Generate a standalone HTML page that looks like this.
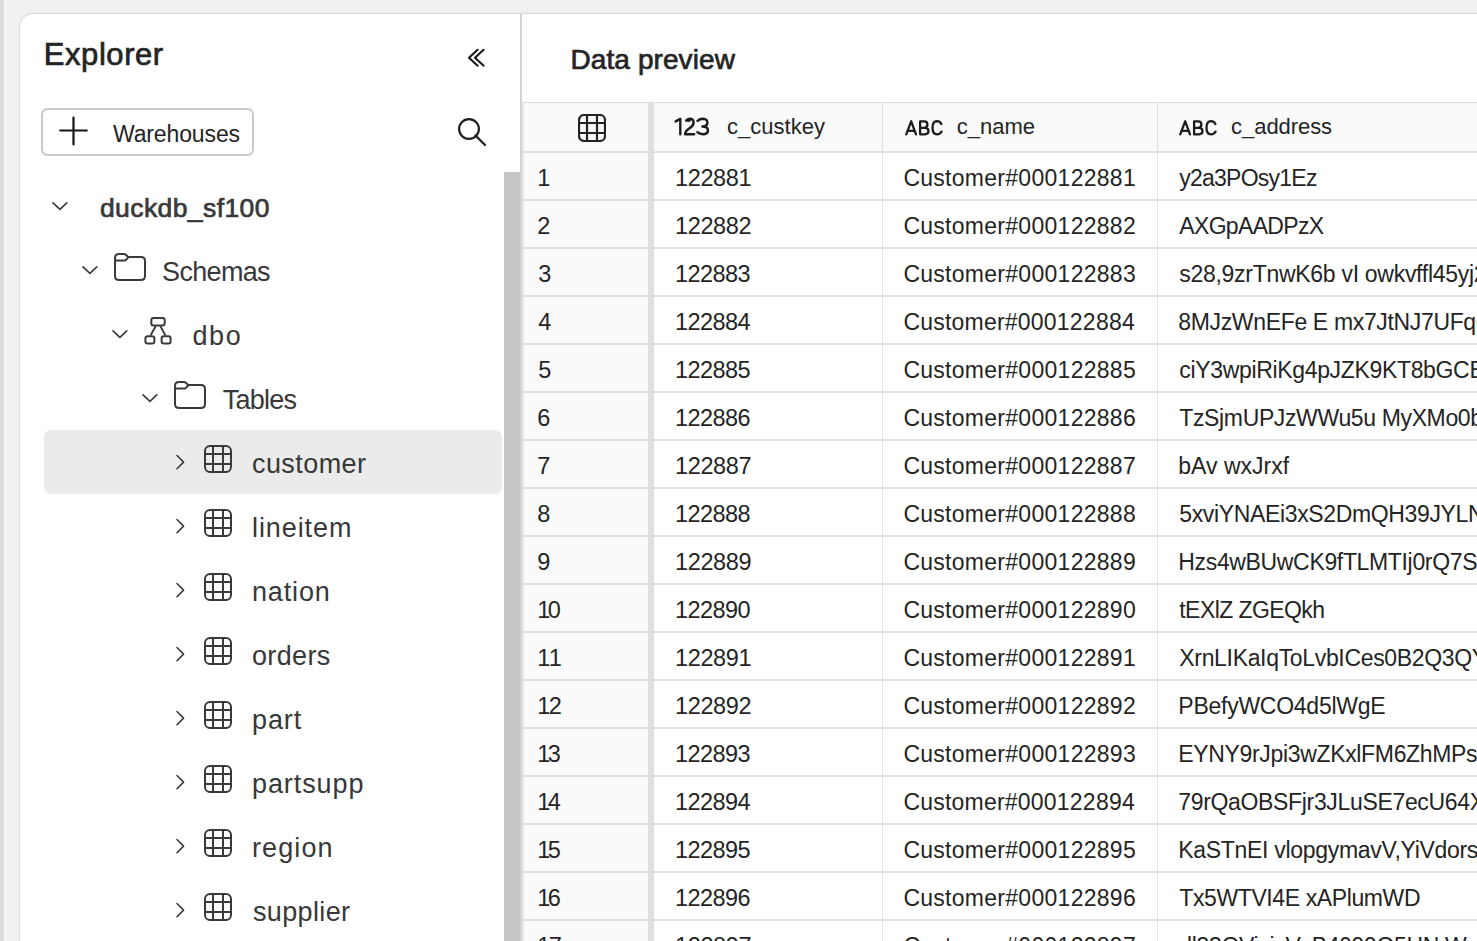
<!DOCTYPE html>
<html><head><meta charset="utf-8"><title>Explorer - Data preview</title>
<style>
html,body{margin:0;padding:0;}
body{width:1477px;height:941px;overflow:hidden;position:relative;background:#f0f0f0;font-family:"Liberation Sans",sans-serif;}
.strip{position:absolute;left:0;top:0;width:4px;height:941px;background:#dcdcdc;box-shadow:2px 0 0 #f5f5f5}
.panel{position:absolute;left:20px;top:14px;width:1480px;height:960px;background:#fff;border-top-left-radius:14px;box-shadow:0 0 0 1px #dadada, 0 -1px 3px rgba(0,0,0,0.07);overflow:hidden}
.divider{position:absolute;left:520px;top:14px;width:2px;height:928px;background:#d4d4d4}
.t{position:absolute;white-space:nowrap;line-height:1;}
.ic{position:absolute;display:block}
.btn{position:absolute;left:40.5px;top:108px;width:213px;height:48px;box-sizing:border-box;border:2px solid #cacaca;border-radius:6.5px;background:#fff}
</style></head><body>
<div class="strip"></div>
<div class="panel"></div>
<div class="divider"></div>
<div class="t" style="left:43.75px;top:38.96px;font-size:31px;font-weight:normal;color:#242424;letter-spacing:0.570px;-webkit-text-stroke:0.7px #242424;">Explorer</div>
<svg class="ic" style="left:460px;top:42px" width="32" height="32" viewBox="0 0 32 32"><path d="M17.6 7.8 L9 15.8 L17.6 23.7 M23.6 7.8 L15 15.8 L23.6 23.7" fill="none" stroke="#1a1a1a" stroke-width="2.1" stroke-linecap="round" stroke-linejoin="round"/></svg><div class="btn"></div><svg class="ic" style="left:58px;top:115px" width="32" height="32" viewBox="0 0 32 32"><path d="M15.5 2.5 V29.5 M2.2 15.5 H28.8" fill="none" stroke="#141414" stroke-width="2.2" stroke-linecap="round"/></svg><div class="t" style="left:112.90px;top:122.53px;font-size:23px;font-weight:normal;color:#242424;letter-spacing:-0.118px;">Warehouses</div>
<svg class="ic" style="left:455px;top:115px" width="34" height="34" viewBox="0 0 34 34"><circle cx="14" cy="14" r="9.9" fill="none" stroke="#1f1f1f" stroke-width="2.2"/><path d="M20.5 20.5 L30 30" stroke="#242424" stroke-width="2.4" stroke-linecap="round"/></svg><div style="position:absolute;left:504px;top:172px;width:16px;height:769px;background:#c7c7c7"></div><svg class="ic" style="left:51px;top:201px" width="17" height="10" viewBox="0 0 17 10"><path d="M2 1.8 L8.9 8.4 L15.8 1.8" fill="none" stroke="#3a3a3a" stroke-width="1.6" stroke-linecap="round" stroke-linejoin="round"/></svg><div class="t" style="left:99.95px;top:194.77px;font-size:26.5px;font-weight:normal;color:#383838;letter-spacing:0.411px;-webkit-text-stroke:0.7px #383838;">duckdb_sf100</div>
<svg class="ic" style="left:81px;top:265px" width="17" height="10" viewBox="0 0 17 10"><path d="M2 1.8 L8.9 8.4 L15.8 1.8" fill="none" stroke="#3a3a3a" stroke-width="1.6" stroke-linecap="round" stroke-linejoin="round"/></svg><svg class="ic" style="left:114px;top:253px" width="32" height="28" viewBox="0 0 32 28"><path d="M1 5 Q1 1 5 1 H9.5 Q11.2 1 12.4 2.2 L14.2 4 H27 Q31 4 31 8 V23 Q31 27 27 27 H5 Q1 27 1 23 Z M1 7.6 H11.2 L14.4 4.2" fill="none" stroke="#3a3a3a" stroke-width="2" stroke-linejoin="round"/></svg><div class="t" style="left:162.10px;top:258.54px;font-size:27px;font-weight:normal;color:#383838;letter-spacing:-0.675px;">Schemas</div>
<svg class="ic" style="left:111px;top:329px" width="17" height="10" viewBox="0 0 17 10"><path d="M2 1.8 L8.9 8.4 L15.8 1.8" fill="none" stroke="#3a3a3a" stroke-width="1.6" stroke-linecap="round" stroke-linejoin="round"/></svg><svg class="ic" style="left:144px;top:317px" width="29" height="28" viewBox="0 0 29 28"><rect x="7.3" y="1" width="13.4" height="7.4" rx="2.2" fill="none" stroke="#3a3a3a" stroke-width="2"/><rect x="1.4" y="19.3" width="9" height="7.2" rx="2.2" fill="none" stroke="#3a3a3a" stroke-width="2"/><rect x="17.6" y="19.3" width="9" height="7.2" rx="2.2" fill="none" stroke="#3a3a3a" stroke-width="2"/><path d="M11.6 9.2 L6.6 18.4 M16.4 9.2 L21.4 18.4" fill="none" stroke="#3a3a3a" stroke-width="1.9"/></svg><div class="t" style="left:192.40px;top:322.54px;font-size:27px;font-weight:normal;color:#383838;letter-spacing:1.684px;">dbo</div>
<svg class="ic" style="left:141px;top:393px" width="17" height="10" viewBox="0 0 17 10"><path d="M2 1.8 L8.9 8.4 L15.8 1.8" fill="none" stroke="#3a3a3a" stroke-width="1.6" stroke-linecap="round" stroke-linejoin="round"/></svg><svg class="ic" style="left:174px;top:381px" width="32" height="28" viewBox="0 0 32 28"><path d="M1 5 Q1 1 5 1 H9.5 Q11.2 1 12.4 2.2 L14.2 4 H27 Q31 4 31 8 V23 Q31 27 27 27 H5 Q1 27 1 23 Z M1 7.6 H11.2 L14.4 4.2" fill="none" stroke="#3a3a3a" stroke-width="2" stroke-linejoin="round"/></svg><div class="t" style="left:222.80px;top:386.54px;font-size:27px;font-weight:normal;color:#383838;letter-spacing:-0.749px;">Tables</div>
<div style="position:absolute;left:44px;top:430px;width:458px;height:64px;background:#ebebeb;border-radius:7px"></div><svg class="ic" style="left:175px;top:453.70px" width="10" height="17" viewBox="0 0 10 17"><path d="M2 1.5 L8.6 8.1 L2 14.7" fill="none" stroke="#3a3a3a" stroke-width="1.6" stroke-linecap="round" stroke-linejoin="round"/></svg><svg class="ic" style="left:204px;top:445px" width="28" height="28" viewBox="0 0 28 28"><rect x="1" y="1" width="26" height="26" rx="5" fill="none" stroke="#3a3a3a" stroke-width="2"/><path d="M9 1 V27 M19 1 V27 M1 9 H27 M1 19 H27" fill="none" stroke="#3a3a3a" stroke-width="2"/></svg><div class="t" style="left:252.00px;top:450.54px;font-size:27px;font-weight:normal;color:#383838;letter-spacing:0.423px;">customer</div>
<svg class="ic" style="left:175px;top:517.70px" width="10" height="17" viewBox="0 0 10 17"><path d="M2 1.5 L8.6 8.1 L2 14.7" fill="none" stroke="#3a3a3a" stroke-width="1.6" stroke-linecap="round" stroke-linejoin="round"/></svg><svg class="ic" style="left:204px;top:509px" width="28" height="28" viewBox="0 0 28 28"><rect x="1" y="1" width="26" height="26" rx="5" fill="none" stroke="#3a3a3a" stroke-width="2"/><path d="M9 1 V27 M19 1 V27 M1 9 H27 M1 19 H27" fill="none" stroke="#3a3a3a" stroke-width="2"/></svg><div class="t" style="left:252.00px;top:514.54px;font-size:27px;font-weight:normal;color:#383838;letter-spacing:0.908px;">lineitem</div>
<svg class="ic" style="left:175px;top:581.70px" width="10" height="17" viewBox="0 0 10 17"><path d="M2 1.5 L8.6 8.1 L2 14.7" fill="none" stroke="#3a3a3a" stroke-width="1.6" stroke-linecap="round" stroke-linejoin="round"/></svg><svg class="ic" style="left:204px;top:573px" width="28" height="28" viewBox="0 0 28 28"><rect x="1" y="1" width="26" height="26" rx="5" fill="none" stroke="#3a3a3a" stroke-width="2"/><path d="M9 1 V27 M19 1 V27 M1 9 H27 M1 19 H27" fill="none" stroke="#3a3a3a" stroke-width="2"/></svg><div class="t" style="left:252.00px;top:578.54px;font-size:27px;font-weight:normal;color:#383838;letter-spacing:0.850px;">nation</div>
<svg class="ic" style="left:175px;top:645.70px" width="10" height="17" viewBox="0 0 10 17"><path d="M2 1.5 L8.6 8.1 L2 14.7" fill="none" stroke="#3a3a3a" stroke-width="1.6" stroke-linecap="round" stroke-linejoin="round"/></svg><svg class="ic" style="left:204px;top:637px" width="28" height="28" viewBox="0 0 28 28"><rect x="1" y="1" width="26" height="26" rx="5" fill="none" stroke="#3a3a3a" stroke-width="2"/><path d="M9 1 V27 M19 1 V27 M1 9 H27 M1 19 H27" fill="none" stroke="#3a3a3a" stroke-width="2"/></svg><div class="t" style="left:252.00px;top:642.54px;font-size:27px;font-weight:normal;color:#383838;letter-spacing:0.334px;">orders</div>
<svg class="ic" style="left:175px;top:709.70px" width="10" height="17" viewBox="0 0 10 17"><path d="M2 1.5 L8.6 8.1 L2 14.7" fill="none" stroke="#3a3a3a" stroke-width="1.6" stroke-linecap="round" stroke-linejoin="round"/></svg><svg class="ic" style="left:204px;top:701px" width="28" height="28" viewBox="0 0 28 28"><rect x="1" y="1" width="26" height="26" rx="5" fill="none" stroke="#3a3a3a" stroke-width="2"/><path d="M9 1 V27 M19 1 V27 M1 9 H27 M1 19 H27" fill="none" stroke="#3a3a3a" stroke-width="2"/></svg><div class="t" style="left:252.00px;top:706.54px;font-size:27px;font-weight:normal;color:#383838;letter-spacing:0.892px;">part</div>
<svg class="ic" style="left:175px;top:773.70px" width="10" height="17" viewBox="0 0 10 17"><path d="M2 1.5 L8.6 8.1 L2 14.7" fill="none" stroke="#3a3a3a" stroke-width="1.6" stroke-linecap="round" stroke-linejoin="round"/></svg><svg class="ic" style="left:204px;top:765px" width="28" height="28" viewBox="0 0 28 28"><rect x="1" y="1" width="26" height="26" rx="5" fill="none" stroke="#3a3a3a" stroke-width="2"/><path d="M9 1 V27 M19 1 V27 M1 9 H27 M1 19 H27" fill="none" stroke="#3a3a3a" stroke-width="2"/></svg><div class="t" style="left:252.00px;top:770.54px;font-size:27px;font-weight:normal;color:#383838;letter-spacing:0.920px;">partsupp</div>
<svg class="ic" style="left:175px;top:837.70px" width="10" height="17" viewBox="0 0 10 17"><path d="M2 1.5 L8.6 8.1 L2 14.7" fill="none" stroke="#3a3a3a" stroke-width="1.6" stroke-linecap="round" stroke-linejoin="round"/></svg><svg class="ic" style="left:204px;top:829px" width="28" height="28" viewBox="0 0 28 28"><rect x="1" y="1" width="26" height="26" rx="5" fill="none" stroke="#3a3a3a" stroke-width="2"/><path d="M9 1 V27 M19 1 V27 M1 9 H27 M1 19 H27" fill="none" stroke="#3a3a3a" stroke-width="2"/></svg><div class="t" style="left:252.00px;top:834.54px;font-size:27px;font-weight:normal;color:#383838;letter-spacing:1.112px;">region</div>
<svg class="ic" style="left:175px;top:901.70px" width="10" height="17" viewBox="0 0 10 17"><path d="M2 1.5 L8.6 8.1 L2 14.7" fill="none" stroke="#3a3a3a" stroke-width="1.6" stroke-linecap="round" stroke-linejoin="round"/></svg><svg class="ic" style="left:204px;top:893px" width="28" height="28" viewBox="0 0 28 28"><rect x="1" y="1" width="26" height="26" rx="5" fill="none" stroke="#3a3a3a" stroke-width="2"/><path d="M9 1 V27 M19 1 V27 M1 9 H27 M1 19 H27" fill="none" stroke="#3a3a3a" stroke-width="2"/></svg><div class="t" style="left:253.00px;top:898.54px;font-size:27px;font-weight:normal;color:#383838;letter-spacing:0.348px;">supplier</div>
<div class="t" style="left:570.55px;top:46.20px;font-size:28px;font-weight:normal;color:#242424;letter-spacing:0.083px;-webkit-text-stroke:0.7px #242424;">Data preview</div>
<div style="position:absolute;left:524px;top:103px;width:953px;height:48px;background:#fafafa"></div><div style="position:absolute;left:524px;top:151px;width:124px;height:790px;background:#fafafa"></div><div style="position:absolute;left:524px;top:151px;width:953px;height:2px;background:#e0e0e0"></div><div style="position:absolute;left:524px;top:199px;width:953px;height:2px;background:#e0e0e0"></div><div style="position:absolute;left:524px;top:247px;width:953px;height:2px;background:#e0e0e0"></div><div style="position:absolute;left:524px;top:295px;width:953px;height:2px;background:#e0e0e0"></div><div style="position:absolute;left:524px;top:343px;width:953px;height:2px;background:#e0e0e0"></div><div style="position:absolute;left:524px;top:391px;width:953px;height:2px;background:#e0e0e0"></div><div style="position:absolute;left:524px;top:439px;width:953px;height:2px;background:#e0e0e0"></div><div style="position:absolute;left:524px;top:487px;width:953px;height:2px;background:#e0e0e0"></div><div style="position:absolute;left:524px;top:535px;width:953px;height:2px;background:#e0e0e0"></div><div style="position:absolute;left:524px;top:583px;width:953px;height:2px;background:#e0e0e0"></div><div style="position:absolute;left:524px;top:631px;width:953px;height:2px;background:#e0e0e0"></div><div style="position:absolute;left:524px;top:679px;width:953px;height:2px;background:#e0e0e0"></div><div style="position:absolute;left:524px;top:727px;width:953px;height:2px;background:#e0e0e0"></div><div style="position:absolute;left:524px;top:775px;width:953px;height:2px;background:#e0e0e0"></div><div style="position:absolute;left:524px;top:823px;width:953px;height:2px;background:#e0e0e0"></div><div style="position:absolute;left:524px;top:871px;width:953px;height:2px;background:#e0e0e0"></div><div style="position:absolute;left:524px;top:919px;width:953px;height:2px;background:#e0e0e0"></div><div style="position:absolute;left:524px;top:967px;width:953px;height:2px;background:#e0e0e0"></div><div style="position:absolute;left:522px;top:102px;width:955px;height:1px;background:#e0e0e0"></div><div style="position:absolute;left:522px;top:102px;width:2px;height:839px;background:#e6e6e6"></div><div style="position:absolute;left:648px;top:103px;width:6px;height:838px;background:#e0e0e0"></div><div style="position:absolute;left:882px;top:103px;width:1px;height:838px;background:#e0e0e0"></div><div style="position:absolute;left:1157px;top:103px;width:1px;height:838px;background:#e0e0e0"></div><svg class="ic" style="left:578px;top:114px" width="28" height="28" viewBox="0 0 28 28"><rect x="1" y="1" width="26" height="26" rx="5" fill="none" stroke="#242424" stroke-width="2.2"/><path d="M9 1 V27 M19 1 V27 M1 9 H27 M1 19 H27" fill="none" stroke="#242424" stroke-width="2.2"/></svg><svg class="ic" style="left:670px;top:112px" width="44" height="28" viewBox="0 0 44 28"><path d="M5.6 9.4 L10.3 6.9 V22.2 M16.2 8.6 Q18.5 6 21.2 6.9 Q23.8 7.9 23.6 11 Q23.3 13.8 19.5 16.2 Q15.2 18.8 15.1 22.2 H24.2 M27.5 8.9 Q29.8 6.8 33 6.8 Q37.4 7 37.4 10.6 Q37.3 14.5 32.4 14.5 Q38 14.6 38 18.4 Q37.8 22.3 33 22.3 Q29.6 22.3 27.4 20.2" fill="none" stroke="#1c1c1c" stroke-width="2.4" stroke-linecap="round" stroke-linejoin="round"/><ellipse cx="18.6" cy="8.1" rx="2.4" ry="1.9" fill="#1c1c1c"/></svg><div class="t" style="left:727.00px;top:116.18px;font-size:22px;font-weight:normal;color:#242424;letter-spacing:0.010px;">c_custkey</div>
<svg class="ic" style="left:900px;top:115px" width="48" height="25" viewBox="0 0 48 25"><path d="M6.2 19.3 L11.2 6.3 L16 19.3 M8.1 15.9 H14.3 M20.1 6.3 V19.3 H25 Q28.5 19.3 28.5 16.1 Q28.5 12.9 25 12.9 H20.1 M20.1 12.9 H24.3 Q27.4 12.9 27.4 9.6 Q27.4 6.3 24.3 6.3 H20.1 M41.4 9 Q39.9 6.2 37 6.2 Q32.5 6.3 32.5 12.8 Q32.5 19.4 37 19.4 Q40.2 19.4 41.6 16.6" fill="none" stroke="#1c1c1c" stroke-width="2.3" stroke-linecap="round" stroke-linejoin="round"/></svg><div class="t" style="left:956.80px;top:116.18px;font-size:22px;font-weight:normal;color:#242424;">c_name</div>
<svg class="ic" style="left:1174px;top:115px" width="48" height="25" viewBox="0 0 48 25"><path d="M6.2 19.3 L11.2 6.3 L16 19.3 M8.1 15.9 H14.3 M20.1 6.3 V19.3 H25 Q28.5 19.3 28.5 16.1 Q28.5 12.9 25 12.9 H20.1 M20.1 12.9 H24.3 Q27.4 12.9 27.4 9.6 Q27.4 6.3 24.3 6.3 H20.1 M41.4 9 Q39.9 6.2 37 6.2 Q32.5 6.3 32.5 12.8 Q32.5 19.4 37 19.4 Q40.2 19.4 41.6 16.6" fill="none" stroke="#1c1c1c" stroke-width="2.3" stroke-linecap="round" stroke-linejoin="round"/></svg><div class="t" style="left:1231.10px;top:116.18px;font-size:22px;font-weight:normal;color:#242424;letter-spacing:-0.063px;">c_address</div>
<div class="t" style="left:537.30px;top:166.91px;font-size:23.5px;font-weight:normal;color:#242424;">1</div>
<div class="t" style="left:675.00px;top:166.91px;font-size:23.5px;font-weight:normal;color:#242424;letter-spacing:-0.370px;">122881</div>
<div class="t" style="left:903.40px;top:167.33px;font-size:23px;font-weight:normal;color:#242424;letter-spacing:0.276px;">Customer#000122881</div>
<div class="t" style="left:1179.30px;top:167.33px;font-size:23px;font-weight:normal;color:#242424;letter-spacing:-0.764px;">y2a3POsy1Ez</div>
<div class="t" style="left:537.30px;top:214.91px;font-size:23.5px;font-weight:normal;color:#242424;">2</div>
<div class="t" style="left:675.00px;top:214.91px;font-size:23.5px;font-weight:normal;color:#242424;letter-spacing:-0.370px;">122882</div>
<div class="t" style="left:903.40px;top:215.33px;font-size:23px;font-weight:normal;color:#242424;letter-spacing:0.276px;">Customer#000122882</div>
<div class="t" style="left:1179.30px;top:215.33px;font-size:23px;font-weight:normal;color:#242424;letter-spacing:-0.666px;">AXGpAADPzX</div>
<div class="t" style="left:538.30px;top:262.91px;font-size:23.5px;font-weight:normal;color:#242424;">3</div>
<div class="t" style="left:675.00px;top:262.91px;font-size:23.5px;font-weight:normal;color:#242424;letter-spacing:-0.570px;">122883</div>
<div class="t" style="left:903.40px;top:263.33px;font-size:23px;font-weight:normal;color:#242424;letter-spacing:0.276px;">Customer#000122883</div>
<div class="t" style="left:1179.30px;top:263.33px;font-size:23px;font-weight:normal;color:#242424;letter-spacing:-0.288px;">s28,9zrTnwK6b vI owkvffl45yj2KxX</div>
<div class="t" style="left:538.30px;top:310.91px;font-size:23.5px;font-weight:normal;color:#242424;">4</div>
<div class="t" style="left:675.00px;top:310.91px;font-size:23.5px;font-weight:normal;color:#242424;letter-spacing:-0.570px;">122884</div>
<div class="t" style="left:903.40px;top:311.33px;font-size:23px;font-weight:normal;color:#242424;letter-spacing:0.217px;">Customer#000122884</div>
<div class="t" style="left:1178.30px;top:311.33px;font-size:23px;font-weight:normal;color:#242424;letter-spacing:-0.345px;">8MJzWnEFe E mx7JtNJ7UFq6LvQ</div>
<div class="t" style="left:538.30px;top:358.91px;font-size:23.5px;font-weight:normal;color:#242424;">5</div>
<div class="t" style="left:675.00px;top:358.91px;font-size:23.5px;font-weight:normal;color:#242424;letter-spacing:-0.570px;">122885</div>
<div class="t" style="left:903.40px;top:359.33px;font-size:23px;font-weight:normal;color:#242424;letter-spacing:0.276px;">Customer#000122885</div>
<div class="t" style="left:1179.30px;top:359.33px;font-size:23px;font-weight:normal;color:#242424;letter-spacing:-0.337px;">ciY3wpiRiKg4pJZK9KT8bGCE7pq</div>
<div class="t" style="left:537.30px;top:406.91px;font-size:23.5px;font-weight:normal;color:#242424;">6</div>
<div class="t" style="left:675.00px;top:406.91px;font-size:23.5px;font-weight:normal;color:#242424;letter-spacing:-0.570px;">122886</div>
<div class="t" style="left:903.40px;top:407.33px;font-size:23px;font-weight:normal;color:#242424;letter-spacing:0.276px;">Customer#000122886</div>
<div class="t" style="left:1179.30px;top:407.33px;font-size:23px;font-weight:normal;color:#242424;letter-spacing:-0.365px;">TzSjmUPJzWWu5u MyXMo0bnq</div>
<div class="t" style="left:537.30px;top:454.91px;font-size:23.5px;font-weight:normal;color:#242424;">7</div>
<div class="t" style="left:675.00px;top:454.91px;font-size:23.5px;font-weight:normal;color:#242424;letter-spacing:-0.370px;">122887</div>
<div class="t" style="left:903.40px;top:455.33px;font-size:23px;font-weight:normal;color:#242424;letter-spacing:0.276px;">Customer#000122887</div>
<div class="t" style="left:1178.30px;top:455.33px;font-size:23px;font-weight:normal;color:#242424;letter-spacing:0.014px;">bAv wxJrxf</div>
<div class="t" style="left:537.30px;top:502.91px;font-size:23.5px;font-weight:normal;color:#242424;">8</div>
<div class="t" style="left:675.00px;top:502.91px;font-size:23.5px;font-weight:normal;color:#242424;letter-spacing:-0.570px;">122888</div>
<div class="t" style="left:903.40px;top:503.33px;font-size:23px;font-weight:normal;color:#242424;letter-spacing:0.276px;">Customer#000122888</div>
<div class="t" style="left:1179.30px;top:503.33px;font-size:23px;font-weight:normal;color:#242424;letter-spacing:-0.359px;">5xviYNAEi3xS2DmQH39JYLNm6</div>
<div class="t" style="left:537.30px;top:550.91px;font-size:23.5px;font-weight:normal;color:#242424;">9</div>
<div class="t" style="left:675.00px;top:550.91px;font-size:23.5px;font-weight:normal;color:#242424;letter-spacing:-0.370px;">122889</div>
<div class="t" style="left:903.40px;top:551.33px;font-size:23px;font-weight:normal;color:#242424;letter-spacing:0.276px;">Customer#000122889</div>
<div class="t" style="left:1178.30px;top:551.33px;font-size:23px;font-weight:normal;color:#242424;letter-spacing:-0.343px;">Hzs4wBUwCK9fTLMTIj0rQ7SFHf</div>
<div class="t" style="left:537.30px;top:598.91px;font-size:23.5px;font-weight:normal;color:#242424;letter-spacing:-2.570px;">10</div>
<div class="t" style="left:675.00px;top:598.91px;font-size:23.5px;font-weight:normal;color:#242424;letter-spacing:-0.570px;">122890</div>
<div class="t" style="left:903.40px;top:599.33px;font-size:23px;font-weight:normal;color:#242424;letter-spacing:0.276px;">Customer#000122890</div>
<div class="t" style="left:1179.30px;top:599.33px;font-size:23px;font-weight:normal;color:#242424;letter-spacing:-0.572px;">tEXlZ ZGEQkh</div>
<div class="t" style="left:537.30px;top:646.91px;font-size:23.5px;font-weight:normal;color:#242424;letter-spacing:0.175px;">11</div>
<div class="t" style="left:675.00px;top:646.91px;font-size:23.5px;font-weight:normal;color:#242424;letter-spacing:-0.370px;">122891</div>
<div class="t" style="left:903.40px;top:647.33px;font-size:23px;font-weight:normal;color:#242424;letter-spacing:0.276px;">Customer#000122891</div>
<div class="t" style="left:1179.30px;top:647.33px;font-size:23px;font-weight:normal;color:#242424;letter-spacing:-0.328px;">XrnLIKaIqToLvbICes0B2Q3QYk</div>
<div class="t" style="left:537.30px;top:694.91px;font-size:23.5px;font-weight:normal;color:#242424;letter-spacing:-1.570px;">12</div>
<div class="t" style="left:675.00px;top:694.91px;font-size:23.5px;font-weight:normal;color:#242424;letter-spacing:-0.370px;">122892</div>
<div class="t" style="left:903.40px;top:695.33px;font-size:23px;font-weight:normal;color:#242424;letter-spacing:0.276px;">Customer#000122892</div>
<div class="t" style="left:1178.30px;top:695.33px;font-size:23px;font-weight:normal;color:#242424;letter-spacing:-0.254px;">PBefyWCO4d5lWgE</div>
<div class="t" style="left:537.30px;top:742.91px;font-size:23.5px;font-weight:normal;color:#242424;letter-spacing:-2.570px;">13</div>
<div class="t" style="left:675.00px;top:742.91px;font-size:23.5px;font-weight:normal;color:#242424;letter-spacing:-0.570px;">122893</div>
<div class="t" style="left:903.40px;top:743.33px;font-size:23px;font-weight:normal;color:#242424;letter-spacing:0.276px;">Customer#000122893</div>
<div class="t" style="left:1178.30px;top:743.33px;font-size:23px;font-weight:normal;color:#242424;letter-spacing:-0.339px;">EYNY9rJpi3wZKxlFM6ZhMPsdf</div>
<div class="t" style="left:537.30px;top:790.91px;font-size:23.5px;font-weight:normal;color:#242424;letter-spacing:-2.570px;">14</div>
<div class="t" style="left:675.00px;top:790.91px;font-size:23.5px;font-weight:normal;color:#242424;letter-spacing:-0.570px;">122894</div>
<div class="t" style="left:903.40px;top:791.33px;font-size:23px;font-weight:normal;color:#242424;letter-spacing:0.217px;">Customer#000122894</div>
<div class="t" style="left:1178.30px;top:791.33px;font-size:23px;font-weight:normal;color:#242424;letter-spacing:-0.337px;">79rQaOBSFjr3JLuSE7ecU64Xkq</div>
<div class="t" style="left:537.30px;top:838.91px;font-size:23.5px;font-weight:normal;color:#242424;letter-spacing:-2.570px;">15</div>
<div class="t" style="left:675.00px;top:838.91px;font-size:23.5px;font-weight:normal;color:#242424;letter-spacing:-0.570px;">122895</div>
<div class="t" style="left:903.40px;top:839.33px;font-size:23px;font-weight:normal;color:#242424;letter-spacing:0.276px;">Customer#000122895</div>
<div class="t" style="left:1178.30px;top:839.33px;font-size:23px;font-weight:normal;color:#242424;letter-spacing:-0.306px;">KaSTnEI vlopgymavV,YiVdorsk</div>
<div class="t" style="left:537.30px;top:886.91px;font-size:23.5px;font-weight:normal;color:#242424;letter-spacing:-2.570px;">16</div>
<div class="t" style="left:675.00px;top:886.91px;font-size:23.5px;font-weight:normal;color:#242424;letter-spacing:-0.570px;">122896</div>
<div class="t" style="left:903.40px;top:887.33px;font-size:23px;font-weight:normal;color:#242424;letter-spacing:0.276px;">Customer#000122896</div>
<div class="t" style="left:1179.30px;top:887.33px;font-size:23px;font-weight:normal;color:#242424;letter-spacing:-0.394px;">Tx5WTVI4E xAPlumWD</div>
<div class="t" style="left:537.30px;top:934.91px;font-size:23.5px;font-weight:normal;color:#242424;letter-spacing:-1.570px;">17</div>
<div class="t" style="left:675.00px;top:934.91px;font-size:23.5px;font-weight:normal;color:#242424;letter-spacing:-0.370px;">122897</div>
<div class="t" style="left:903.40px;top:935.33px;font-size:23px;font-weight:normal;color:#242424;letter-spacing:0.276px;">Customer#000122897</div>
<div class="t" style="left:1179.30px;top:935.33px;font-size:23px;font-weight:normal;color:#242424;letter-spacing:-0.335px;">dl33GVivjsVcB4099Q5HN W</div>

</body></html>
